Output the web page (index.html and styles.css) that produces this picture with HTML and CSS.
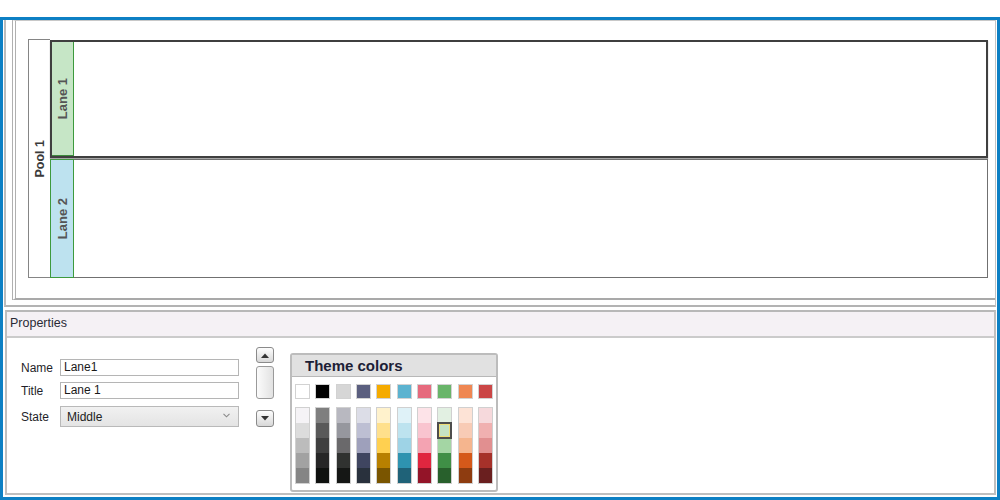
FILE: index.html
```html
<!DOCTYPE html>
<html>
<head>
<meta charset="utf-8">
<link rel="stylesheet" href="styles.css">
</head>
<body>
<div class="top-gap"></div>
<div class="frame">
  <div class="canvas-outer">
    <div class="canvas-inner">
      <div class="pool">
        <div class="pool-head"><span class="vlabel pool-label">Pool 1</span></div>
        <div class="lanes">
          <div class="lane lane-sel">
            <div class="lane-head lane-green"><span class="vlabel lane-label">Lane 1</span></div>
            <div class="lane-body"></div>
          </div>
          <div class="lane lane-2">
            <div class="lane-head lane-blue"><span class="vlabel lane-label">Lane 2</span></div>
            <div class="lane-body"></div>
          </div>
        </div>
      </div>
    </div>
  </div>
  <div class="props">
    <div class="props-header">Properties</div>
    <div class="props-body">
      <div class="form">
        <div class="row r1"><span class="lbl">Name</span><div class="field">Lane1</div></div>
        <div class="row r2"><span class="lbl">Title</span><div class="field">Lane 1</div></div>
        <div class="row r3"><span class="lbl">State</span>
          <div class="select"><span>Middle</span>
            <svg class="chev" width="7" height="5" viewBox="0 0 7 5"><path d="M0.5 0.8 L3.5 3.8 L6.5 0.8" fill="none" stroke="#8a8a8a" stroke-width="1.1"/></svg>
          </div>
        </div>
      </div>
      <div class="scrollbar">
        <div class="sb-btn sb-up"><svg width="8" height="5" viewBox="0 0 8 5"><path d="M0 5 L4 0.5 L8 5 Z" fill="#333"/></svg></div>
        <div class="sb-thumb"></div>
        <div class="sb-btn sb-down"><svg width="8" height="5" viewBox="0 0 8 5"><path d="M0 0 L4 4.5 L8 0 Z" fill="#333"/></svg></div>
      </div>
      <div class="theme">
        <div class="theme-head">Theme colors</div>
        <div class="theme-top">
          <div class="sw" style="background:#ffffff"></div>
          <div class="sw" style="background:#000000"></div>
          <div class="sw" style="background:#d6d6d6"></div>
          <div class="sw" style="background:#5b5f7f"></div>
          <div class="sw" style="background:#f5ab00"></div>
          <div class="sw" style="background:#5cb3d0"></div>
          <div class="sw" style="background:#e66a7d"></div>
          <div class="sw" style="background:#69b56a"></div>
          <div class="sw" style="background:#ef8752"></div>
          <div class="sw" style="background:#cb4646"></div>
        </div>
        <div class="theme-shades">
          <div class="col"><i style="background:#f5f3f6"></i><i style="background:#dcdcdc"></i><i style="background:#bcbcbc"></i><i style="background:#a2a2a2"></i><i style="background:#858585"></i></div>
          <div class="col"><i style="background:#7f7f7f"></i><i style="background:#595959"></i><i style="background:#3f3f3f"></i><i style="background:#262626"></i><i style="background:#0f110f"></i></div>
          <div class="col"><i style="background:#b8b8c0"></i><i style="background:#96979e"></i><i style="background:#6a696b"></i><i style="background:#303230"></i><i style="background:#151715"></i></div>
          <div class="col"><i style="background:#dcdde7"></i><i style="background:#bdbfd3"></i><i style="background:#9ea0bb"></i><i style="background:#3f4560"></i><i style="background:#29313d"></i></div>
          <div class="col"><i style="background:#fff2cc"></i><i style="background:#ffe08c"></i><i style="background:#ffd050"></i><i style="background:#b88000"></i><i style="background:#7a5500"></i></div>
          <div class="col"><i style="background:#dff2f8"></i><i style="background:#bde3ef"></i><i style="background:#9ed3e6"></i><i style="background:#2e93b0"></i><i style="background:#1f6278"></i></div>
          <div class="col"><i style="background:#fde3e8"></i><i style="background:#f9c4cf"></i><i style="background:#f4a3b2"></i><i style="background:#e0263f"></i><i style="background:#931428"></i></div>
          <div class="col"><i style="background:#e2f0e2"></i><i class="sel" style="background:#c5e3c5"></i><i style="background:#a4d6a4"></i><i style="background:#3f8f46"></i><i style="background:#28602c"></i></div>
          <div class="col"><i style="background:#fde3d6"></i><i style="background:#f8cbb5"></i><i style="background:#f5b58e"></i><i style="background:#d5591a"></i><i style="background:#8e3c10"></i></div>
          <div class="col"><i style="background:#f6d9dc"></i><i style="background:#f0b0b0"></i><i style="background:#e18f90"></i><i style="background:#a6312a"></i><i style="background:#6a1f1f"></i></div>
        </div>
      </div>
    </div>
  </div>
</div>
</body>
</html>
```
FILE: styles.css
```css
* { box-sizing: border-box; }
html, body { margin: 0; padding: 0; background: #fff; }
body {
  font-family: "Liberation Sans", Arial, sans-serif;
  font-size: 12px;
  color: #222;
  width: 1000px;
  height: 500px;
  overflow: hidden;
}
.top-gap { height: 17px; }
.frame {
  height: 483px;
  border: 3px solid #0d80c4;
  display: flex;
  flex-direction: column;
}
.canvas-outer {
  height: 287px;
  margin: 0 1px;
  border-left: 2px solid #bcbcbc;
  border-right: 1px solid #c4c4c4;
  border-bottom: 2px solid #b3b3b3;
}
.canvas-inner {
  height: 280px;
  margin-left: 6px;
  border-left: 4px double #b0b0b0;
  border-top: 1px solid #c8c8c8;
  border-bottom: 2px solid #a9a9a9;
  padding: 18px 0 0 12px;
}
.pool { width: 960px; height: 239px; display: flex; }
.pool-head {
  width: 22px;
  border: 1px solid #858585;
  border-right: none;
  display: flex;
  align-items: center;
  justify-content: center;
}
.vlabel {
  writing-mode: vertical-rl;
  transform: rotate(180deg);
  font-weight: bold;
  white-space: nowrap;
}
.pool-label { font-size: 12.5px; color: #3a3a3a; }
.lane-label { font-size: 13px; color: #555; }
.lanes { flex: 1; padding-top: 1px; display: flex; flex-direction: column; }
.lane { display: flex; }
.lane-head { display: flex; align-items: center; justify-content: center; }
.lane-body { flex: 1; background: #fff; }
.lane-sel {
  height: 118px;
  border: 2px solid #3f3f3f;
  box-shadow: 0 1px 1px rgba(0,0,0,0.35);
}
.lane-green {
  width: 22px;
  background: #c6e6c6;
  border-right: 1px solid #3d9a3d;
  border-bottom: 1px solid #3d8a3d;
}
.lane-2 { margin-top: 1px; height: 119px; }
.lane-blue { width: 24px; background: #bde2ef; border: 1px solid #3d9a3d; }
.lane-2 .lane-body { border: 1px solid #707070; border-left: none; }

.props {
  margin: 3px 1px 0 2px;
  height: 185px;
  border: 2px solid #bfbfbf;
  border-top-color: #b8b8b8;
}
.props-header {
  height: 26px;
  background: #f5f1f5;
  border-bottom: 2px solid #cbcbcb;
  line-height: 23px;
  padding-left: 3px;
  font-size: 12.5px;
  color: #2a2a35;
}
.props-body { display: flex; align-items: flex-start; padding-left: 14px; }
.form { margin-top: 21px; }
.row { display: flex; align-items: center; }
.r1 { height: 17px; margin-bottom: 6px; }
.r2 { height: 17px; margin-bottom: 7px; }
.r3 { height: 21px; }
.lbl { width: 39px; color: #1f1f2a; }
.field {
  width: 179px;
  height: 17px;
  border: 1px solid #b5b5b5;
  padding-left: 3px;
  line-height: 15px;
  color: #1a1a1a;
}
.select {
  width: 179px;
  height: 21px;
  border: 1px solid #b9b9b9;
  background: linear-gradient(#f1f1f1, #e4e4e4);
  padding: 0 8px 0 6px;
  display: flex;
  align-items: center;
  justify-content: space-between;
  color: #222;
}
.chev { margin-top: -3px; }
.scrollbar {
  margin-left: 17px;
  margin-top: 9px;
  width: 18px;
  display: flex;
  flex-direction: column;
}
.sb-btn {
  border: 1px solid #8a8a8a;
  border-radius: 3px;
  background: linear-gradient(#fdfdfd, #d8d8d8);
  display: flex;
  align-items: center;
  justify-content: center;
}
.sb-up { height: 16px; }
.sb-down { height: 17px; margin-top: 11px; }
.sb-thumb {
  margin-top: 3px;
  height: 33px;
  border: 1px solid #9a9a9a;
  border-radius: 3px;
  background: linear-gradient(90deg, #fbfbfb, #e2e2e2);
}
.theme {
  margin-left: 16px;
  margin-top: 15px;
  width: 208px;
  height: 139px;
  border: 2px solid #bcbcbc;
  border-radius: 3px;
}
.theme-head {
  height: 22px;
  background: #e1e1e1;
  border-bottom: 1px solid #b8b8b8;
  font-weight: bold;
  font-size: 15px;
  color: #1c2036;
  padding-left: 13px;
  line-height: 21px;
}
.theme-top, .theme-shades {
  display: grid;
  grid-template-columns: repeat(10, 15px);
  column-gap: 5.33px;
  margin-left: 3px;
}
.theme-top { margin-top: 7px; }
.sw { width: 15px; height: 15px; border: 1px solid #d2d2d2; }
.theme-shades { margin-top: 8px; }
.col { width: 15px; border: 1px solid #d0d0d0; display: flex; flex-direction: column; }
.col i { display: block; height: 15px; }
.col i.sel {
  position: relative;
  z-index: 1;
  outline: 2px solid #4d4d4d;
  outline-offset: -1px;
  box-shadow: inset 0 0 0 2px #eedd77;
}
```
